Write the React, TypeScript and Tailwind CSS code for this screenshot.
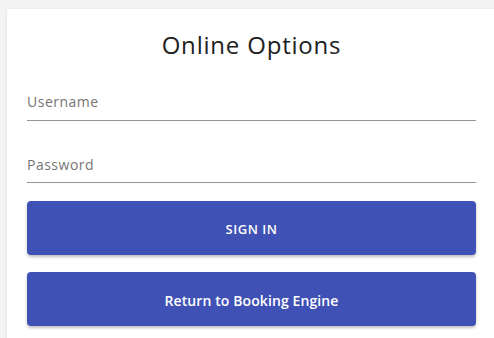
export default function App() {
  return (
    <div className="w-[494px] h-[338px] overflow-hidden bg-[#f4f4f4] pl-[7px] pt-[9px]" style={{ fontFamily: "'Open Sans', 'Noto Sans', sans-serif" }}>
      <div className="w-[489px] h-[340px] bg-white shadow-[0_1px_3px_rgba(0,0,0,0.12)] px-[20px] flex flex-col">
        <h1 className="text-[24px] leading-[30px] tracking-[0.8px] text-[#212121] text-center mt-[21px] font-normal">Online Options</h1>
        <div className="mt-[31px] h-[30px] pt-[1px] border-b border-[#949494] text-[14px] tracking-[0.5px] text-[#757575] leading-[20px]">Username</div>
        <div className="mt-[33px] h-[29px] pt-[1px] border-b border-[#949494] text-[14px] tracking-[0.5px] text-[#757575] leading-[20px]">Password</div>
        <button className="mt-[18px] h-[54px] w-full pt-[3px] rounded-[4px] bg-[#3f51b5] text-white text-[13px] tracking-[0.5px] font-semibold shadow-[0_2px_3px_rgba(0,0,0,0.25)]">SIGN IN</button>
        <button className="mt-[17px] h-[54px] w-full pt-[2px] rounded-[4px] bg-[#3f51b5] text-white text-[14px] tracking-[0.1px] font-semibold shadow-[0_2px_3px_rgba(0,0,0,0.25)]">Return to Booking Engine</button>
      </div>
    </div>
  );
}
